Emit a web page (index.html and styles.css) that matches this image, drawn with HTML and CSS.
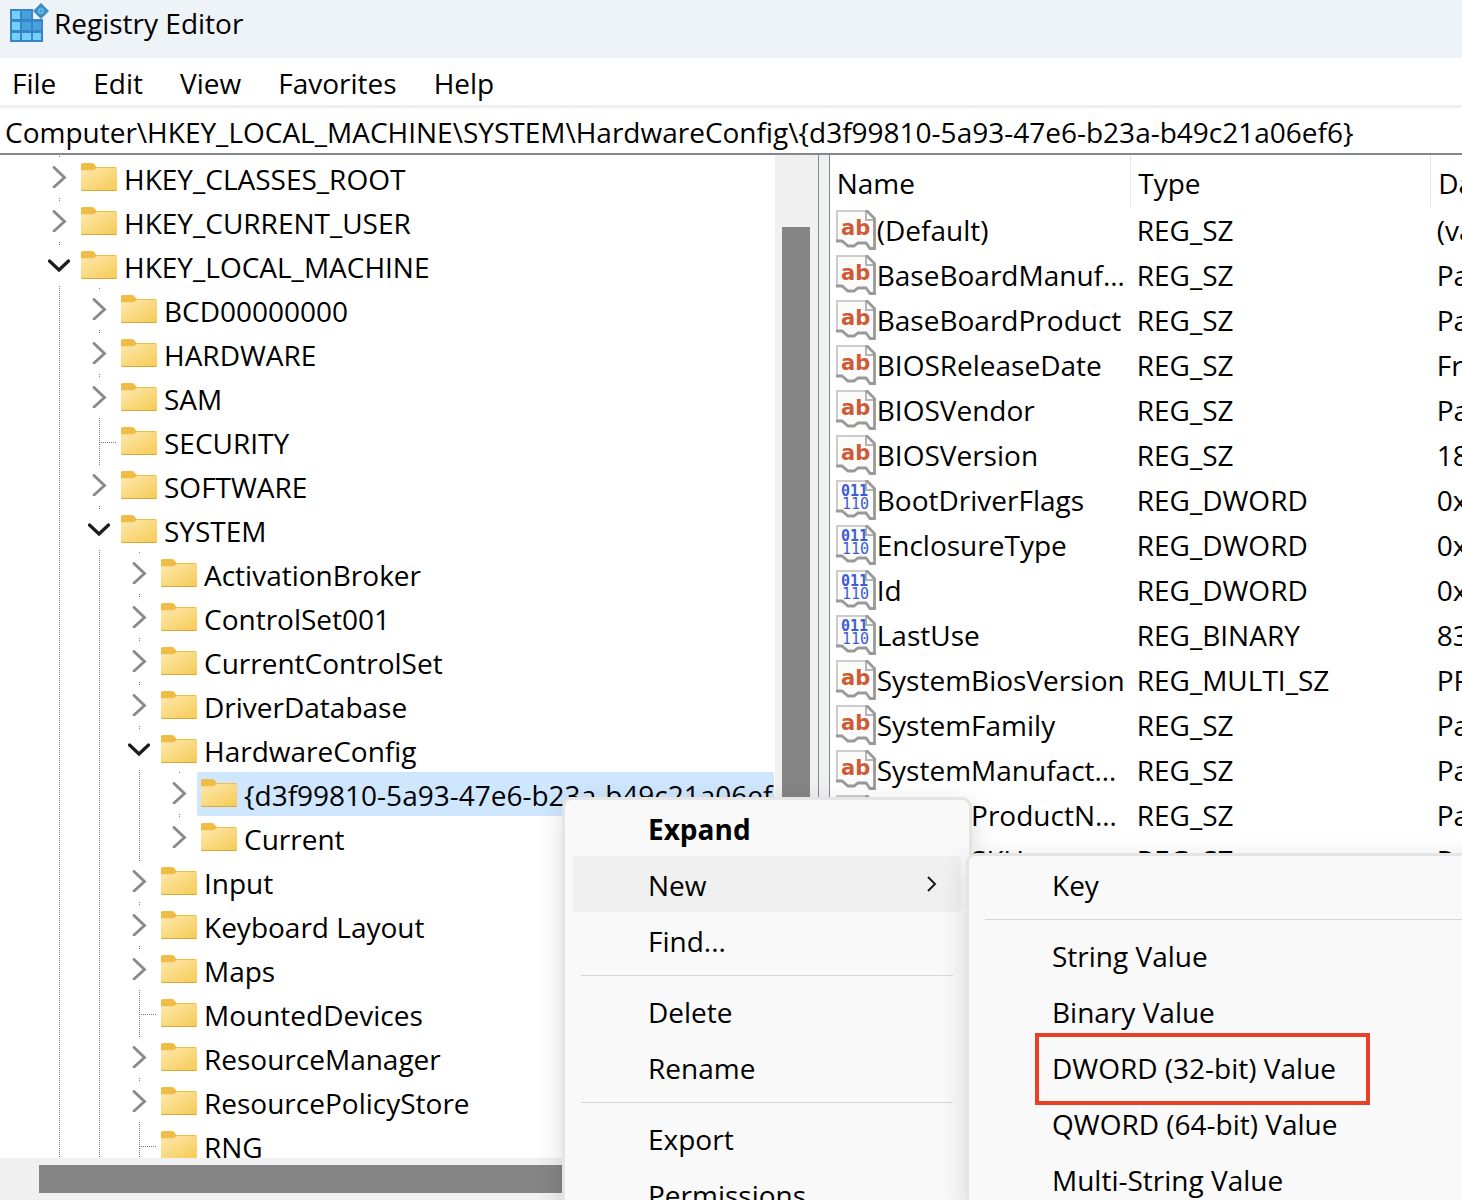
FILE: index.html
```
<!DOCTYPE html>
<html lang="en">
<head>
    <meta charset="UTF-8">
    <meta name="viewport" content="width=device-width, initial-scale=1.0">
    <title>Registry Editor</title>
    <link rel="stylesheet" href="styles.css">
</head>
<body>
    <!-- Shared icons -->
    <svg class="icon-defs" aria-hidden="true">
        <defs>
            <linearGradient id="folder-fill" x1="0" y1="0" x2="1" y2="1">
                <stop offset="0" stop-color="#fdeab0"/>
                <stop offset="1" stop-color="#f6ca54"/>
            </linearGradient>
        </defs>
        <symbol id="folder" viewBox="0 0 36 28">
            <path d="M0 9V1.500Q0 0 1.500 0H11Q12.500 0 13.500 1.200L15.500 4H34.500Q36 4 36 5.500V9Z" fill="#efbd45"/>
            <path d="M0 26.500V7.500H11.500Q13 7.500 14 6.500L15.500 5H35Q36 5 36 6V26.500Q36 28 34.500 28H1.500Q0 28 0 26.500Z" fill="#dba837"/>
            <path d="M0 25.500V7.200H11.500Q13 7.200 14 6.200L15.500 5H35Q36 5 36 6V25.500Q36 27 34.500 27H1.500Q0 27 0 25.500Z" fill="url(#folder-fill)"/>
        </symbol>
        <symbol id="closed" viewBox="0 0 22 22">
            <path d="M6 1.500L16.500 11.500L6 21" fill="none" stroke="#8a8a8a" stroke-width="2.900" stroke-linecap="round"/>
        </symbol>
        <symbol id="open" viewBox="0 0 22 22">
            <path d="M1.500 7L11 16L20.500 7" fill="none" stroke="#1c1c1c" stroke-width="3.200" stroke-linecap="round"/>
        </symbol>
        <symbol id="page" viewBox="0 0 40 40">
            <path d="M1 1H30L38 9V38L33 37L29 32H22L19 35H12L6 31H1Z" fill="#fbfbfa"/>
            <path d="M1 31V1H30" fill="none" stroke="#cdcdcd" stroke-width="2"/>
            <path d="M30 1V10H38" fill="none" stroke="#b4b4b4" stroke-width="2"/>
            <path d="M30 0L38.500 8.500V38.500H34L30 33H22L18 36H12L6 31H0" fill="none" stroke="#999" stroke-width="2.800"/>
        </symbol>
        <symbol id="string" viewBox="0 0 40 40">
            <use href="#page"/>
            <text x="5" y="25" class="glyph-ab">ab</text>
        </symbol>
        <symbol id="binary" viewBox="0 0 40 40">
            <use href="#page"/>
            <text x="5" y="16" class="glyph-bits bold">011</text>
            <text x="6" y="29" class="glyph-bits">110</text>
        </symbol>
    </svg>

    <!-- Title bar -->
    <header class="title-bar">
        <svg class="app-icon" viewBox="0 0 40 40" aria-hidden="true">
            <path d="M1 6H24V16H34V39H1Z" fill="#3784c6"/>
            <path d="M3 8h8v8H3zM3 19h8v8H3zM3 30h8v7H3zM13 30h9v7h-9zM24 30h8v7h-8z" fill="#74cffa"/>
            <path d="M13 8h9v8h-9zM13 19h9v8h-9zM24 19h8v8h-8z" fill="#47a1db"/>
            <path d="M32 0L40 8L32 16L24 8Z" fill="#3c8cc4"/>
            <path d="M32 4L36 8L32 12L28 8Z" fill="#78cdf4"/>
            <path d="M32 4V12M28 8H36" stroke="#3c8cc4"/>
        </svg>
        <span>Registry Editor</span>
    </header>

    <!-- Menu bar -->
    <nav class="menu-bar">
        <button type="button">File</button>
        <button type="button">Edit</button>
        <button type="button">View</button>
        <button type="button">Favorites</button>
        <button type="button">Help</button>
    </nav>

    <!-- Address bar -->
    <input class="address" type="text" aria-label="Address" value="Computer\HKEY_LOCAL_MACHINE\SYSTEM\HardwareConfig\{d3f99810-5a93-47e6-b23a-b49c21a06ef6}">

    <main class="panes">
        <!-- Key tree -->
        <section class="tree-pane">
            <div class="tree-view">
                <ul class="tree">
                    <li>
                        <div class="row"><button class="twisty" aria-label="Expand"><svg><use href="#closed"/></svg></button><span class="key"><svg><use href="#folder"/></svg>HKEY_CLASSES_ROOT</span></div>
                    </li>
                    <li>
                        <div class="row"><button class="twisty" aria-label="Expand"><svg><use href="#closed"/></svg></button><span class="key"><svg><use href="#folder"/></svg>HKEY_CURRENT_USER</span></div>
                    </li>
                    <li>
                        <div class="row"><button class="twisty" aria-label="Collapse"><svg><use href="#open"/></svg></button><span class="key"><svg><use href="#folder"/></svg>HKEY_LOCAL_MACHINE</span></div>
                        <ul>
                            <li>
                                <div class="row"><button class="twisty" aria-label="Expand"><svg><use href="#closed"/></svg></button><span class="key"><svg><use href="#folder"/></svg>BCD00000000</span></div>
                            </li>
                            <li>
                                <div class="row"><button class="twisty" aria-label="Expand"><svg><use href="#closed"/></svg></button><span class="key"><svg><use href="#folder"/></svg>HARDWARE</span></div>
                            </li>
                            <li>
                                <div class="row"><button class="twisty" aria-label="Expand"><svg><use href="#closed"/></svg></button><span class="key"><svg><use href="#folder"/></svg>SAM</span></div>
                            </li>
                            <li>
                                <div class="row leaf"><span class="key"><svg><use href="#folder"/></svg>SECURITY</span></div>
                            </li>
                            <li>
                                <div class="row"><button class="twisty" aria-label="Expand"><svg><use href="#closed"/></svg></button><span class="key"><svg><use href="#folder"/></svg>SOFTWARE</span></div>
                            </li>
                            <li>
                                <div class="row"><button class="twisty" aria-label="Collapse"><svg><use href="#open"/></svg></button><span class="key"><svg><use href="#folder"/></svg>SYSTEM</span></div>
                                <ul>
                                    <li>
                                        <div class="row"><button class="twisty" aria-label="Expand"><svg><use href="#closed"/></svg></button><span class="key"><svg><use href="#folder"/></svg>ActivationBroker</span></div>
                                    </li>
                                    <li>
                                        <div class="row"><button class="twisty" aria-label="Expand"><svg><use href="#closed"/></svg></button><span class="key"><svg><use href="#folder"/></svg>ControlSet001</span></div>
                                    </li>
                                    <li>
                                        <div class="row"><button class="twisty" aria-label="Expand"><svg><use href="#closed"/></svg></button><span class="key"><svg><use href="#folder"/></svg>CurrentControlSet</span></div>
                                    </li>
                                    <li>
                                        <div class="row"><button class="twisty" aria-label="Expand"><svg><use href="#closed"/></svg></button><span class="key"><svg><use href="#folder"/></svg>DriverDatabase</span></div>
                                    </li>
                                    <li>
                                        <div class="row"><button class="twisty" aria-label="Collapse"><svg><use href="#open"/></svg></button><span class="key"><svg><use href="#folder"/></svg>HardwareConfig</span></div>
                                        <ul>
                                            <li>
                                                <div class="row"><button class="twisty" aria-label="Expand"><svg><use href="#closed"/></svg></button><span class="key selected"><svg><use href="#folder"/></svg>{d3f99810-5a93-47e6-b23a-b49c21a06ef6}</span></div>
                                            </li>
                                            <li class="last">
                                                <div class="row"><button class="twisty" aria-label="Expand"><svg><use href="#closed"/></svg></button><span class="key"><svg><use href="#folder"/></svg>Current</span></div>
                                            </li>
                                        </ul>
                                    </li>
                                    <li>
                                        <div class="row"><button class="twisty" aria-label="Expand"><svg><use href="#closed"/></svg></button><span class="key"><svg><use href="#folder"/></svg>Input</span></div>
                                    </li>
                                    <li>
                                        <div class="row"><button class="twisty" aria-label="Expand"><svg><use href="#closed"/></svg></button><span class="key"><svg><use href="#folder"/></svg>Keyboard Layout</span></div>
                                    </li>
                                    <li>
                                        <div class="row"><button class="twisty" aria-label="Expand"><svg><use href="#closed"/></svg></button><span class="key"><svg><use href="#folder"/></svg>Maps</span></div>
                                    </li>
                                    <li>
                                        <div class="row leaf"><span class="key"><svg><use href="#folder"/></svg>MountedDevices</span></div>
                                    </li>
                                    <li>
                                        <div class="row"><button class="twisty" aria-label="Expand"><svg><use href="#closed"/></svg></button><span class="key"><svg><use href="#folder"/></svg>ResourceManager</span></div>
                                    </li>
                                    <li>
                                        <div class="row"><button class="twisty" aria-label="Expand"><svg><use href="#closed"/></svg></button><span class="key"><svg><use href="#folder"/></svg>ResourcePolicyStore</span></div>
                                    </li>
                                    <li>
                                        <div class="row leaf"><span class="key"><svg><use href="#folder"/></svg>RNG</span></div>
                                    </li>
                                </ul>
                            </li>
                        </ul>
                    </li>
                </ul>
            </div>
            <div class="scroll-y"><div class="thumb"></div></div>
            <div class="scroll-x"><div class="thumb"></div></div>
        </section>

        <div class="splitter"></div>

        <!-- Values of the selected key -->
        <section class="list-pane">
            <table class="values">
                <colgroup>
                    <col class="col-name">
                    <col class="col-type">
                    <col class="col-data">
                </colgroup>
                <thead>
                    <tr><th>Name</th><th>Type</th><th>Data</th></tr>
                </thead>
                <tbody>
                    <tr><td><div class="value"><svg><use href="#string"/></svg><span>(Default)</span></div></td><td>REG_SZ</td><td>(value not set)</td></tr>
                    <tr><td><div class="value"><svg><use href="#string"/></svg><span>BaseBoardManufacturer</span></div></td><td>REG_SZ</td><td>Parallels</td></tr>
                    <tr><td><div class="value"><svg><use href="#string"/></svg><span>BaseBoardProduct</span></div></td><td>REG_SZ</td><td>Parallels</td></tr>
                    <tr><td><div class="value"><svg><use href="#string"/></svg><span>BIOSReleaseDate</span></div></td><td>REG_SZ</td><td>Fri</td></tr>
                    <tr><td><div class="value"><svg><use href="#string"/></svg><span>BIOSVendor</span></div></td><td>REG_SZ</td><td>Parallels</td></tr>
                    <tr><td><div class="value"><svg><use href="#string"/></svg><span>BIOSVersion</span></div></td><td>REG_SZ</td><td>18</td></tr>
                    <tr><td><div class="value"><svg><use href="#binary"/></svg><span>BootDriverFlags</span></div></td><td>REG_DWORD</td><td>0x00000000</td></tr>
                    <tr><td><div class="value"><svg><use href="#binary"/></svg><span>EnclosureType</span></div></td><td>REG_DWORD</td><td>0x00000000</td></tr>
                    <tr><td><div class="value"><svg><use href="#binary"/></svg><span>Id</span></div></td><td>REG_DWORD</td><td>0x00000000</td></tr>
                    <tr><td><div class="value"><svg><use href="#binary"/></svg><span>LastUse</span></div></td><td>REG_BINARY</td><td>83</td></tr>
                    <tr><td><div class="value"><svg><use href="#string"/></svg><span>SystemBiosVersion</span></div></td><td>REG_MULTI_SZ</td><td>PRLS</td></tr>
                    <tr><td><div class="value"><svg><use href="#string"/></svg><span>SystemFamily</span></div></td><td>REG_SZ</td><td>Parallels</td></tr>
                    <tr><td><div class="value"><svg><use href="#string"/></svg><span>SystemManufacturer</span></div></td><td>REG_SZ</td><td>Parallels</td></tr>
                    <tr><td><div class="value"><svg><use href="#string"/></svg><span>SystemProductName</span></div></td><td>REG_SZ</td><td>Parallels</td></tr>
                    <tr><td><div class="value"><svg><use href="#string"/></svg><span>SystemSKU</span></div></td><td>REG_SZ</td><td>Parallels</td></tr>
                </tbody>
            </table>
        </section>
    </main>

    <!-- Context menu of the key -->
    <ul class="context-menu key-menu">
        <li><button type="button" class="default">Expand</button></li>
        <li>
            <button type="button" class="active">New
                <svg class="arrow" viewBox="0 0 10 18" aria-hidden="true"><path d="M1 2L8 9L1 16" fill="none" stroke="#1c1c1c" stroke-width="2"/></svg>
            </button>
        </li>
        <li><button type="button">Find...</button></li>
        <li class="separator"></li>
        <li><button type="button">Delete</button></li>
        <li><button type="button">Rename</button></li>
        <li class="separator"></li>
        <li><button type="button">Export</button></li>
        <li><button type="button">Permissions...</button></li>
    </ul>

    <!-- "New" submenu -->
    <ul class="context-menu new-menu">
        <li><button type="button">Key</button></li>
        <li class="separator"></li>
        <li><button type="button">String Value</button></li>
        <li><button type="button">Binary Value</button></li>
        <li class="marked"><button type="button">DWORD (32-bit) Value</button></li>
        <li><button type="button">QWORD (64-bit) Value</button></li>
        <li><button type="button">Multi-String Value</button></li>
    </ul>
</body>
</html>
```
FILE: styles.css
```
/* Global Styles */
*,
*::before,
*::after {
    box-sizing: border-box;
}

body {
    display: flex;
    flex-direction: column;
    position: relative;
    height: 100vh;
    margin: 0;
    overflow: hidden;
    background-color: #fff;
    color: #000;
    font-family: "Open Sans", "Noto Sans", sans-serif;
    font-size: 28px;
}

button,
input {
    margin: 0;
    padding: 0;
    border: none;
    background: none;
    color: inherit;
    font: inherit;
}

ul {
    margin: 0;
    padding: 0;
    list-style: none;
}

.icon-defs {
    position: absolute;
    width: 0;
    height: 0;
}

/* Title, menu and address bars */
.title-bar {
    display: flex;
    flex: none;
    align-items: center;
    gap: 5px;
    height: 58px;
    padding: 0 9px 12px;
    background-color: #eef3f8;
}

.app-icon {
    width: 40px;
    height: 40px;
}

.menu-bar {
    display: flex;
    flex: none;
    gap: 37px;
    height: 50px;
    padding: 2px 12px 0;
    border-bottom: 3px solid #f0f0f0;
}

.address {
    flex: none;
    width: 100%;
    height: 47px;
    padding: 2px 5px 0;
    border-bottom: 2px solid #828790;
    outline: none;
}

/* Panes */
.panes {
    display: grid;
    flex: 1;
    grid-template-columns: 56% 11px 1fr;
    min-height: 0;
}

.splitter {
    background-color: #f0f0f0;
    border-right: 1px solid #828790;
}

.tree-pane {
    display: grid;
    grid-template-columns: 1fr 43px;
    grid-template-rows: 1fr 42px;
    min-width: 0;
    min-height: 0;
    border-right: 1px solid #828790;
}

.tree-view {
    min-width: 0;
    overflow: hidden;
    padding-top: 1px;
}

.scroll-y,
.scroll-x {
    background-color: #f0f0f0;
}

.scroll-y {
    padding: 72px 7px 0;
}

.scroll-x {
    grid-column: 1 / 3;
    padding: 7px 0 7px 39px;
}

.thumb {
    background-color: #858585;
}

.scroll-y .thumb {
    width: 28px;
    height: 85%;
}

.scroll-x .thumb {
    width: 80%;
    height: 28px;
}

/* Key tree */
.tree {
    padding-left: 40px;
}

.tree ul {
    padding-left: 40px;
}

.tree li {
    background: linear-gradient(#777 50%, transparent 50%) 19px 0 / 1px 2px repeat-y;
}

.tree li.last {
    background-repeat: no-repeat;
}

.row {
    display: flex;
    height: 44px;
}

.leaf {
    margin-left: 19px;
    padding-left: 18px;
    background: linear-gradient(to right, #777 50%, transparent 50%) 0 22px / 2px 1px repeat-x;
}

.leaf .key {
    background-color: #fff;
}

.twisty {
    display: flex;
    flex: none;
    align-items: center;
    justify-content: center;
    width: 37px;
    height: 40px;
    margin-top: 1px;
    background-color: #fff;
}

.twisty svg {
    width: 22px;
    height: 22px;
}

.key {
    display: flex;
    flex: 1;
    align-items: center;
    gap: 7px;
    min-width: 0;
    padding: 2px 0 0 4px;
    overflow: hidden;
    white-space: nowrap;
}

.key svg {
    flex: none;
    width: 36px;
    height: 28px;
    margin-bottom: 4px;
}

.key.selected {
    margin-right: 1px;
    border-radius: 2px;
    background-color: #cfe6ff;
}

/* Value list */
.list-pane {
    min-width: 0;
    overflow: hidden;
}

.values {
    width: 1001px;
    border-collapse: collapse;
    table-layout: fixed;
}

.col-name {
    width: 301px;
}

.col-type {
    width: 300px;
}

.values th {
    height: 52px;
    padding: 4px 0 0 7px;
    border-right: 1px solid #e5e5e5;
    font-weight: normal;
    text-align: left;
}

.values td {
    height: 45px;
    padding: 2px 0 0 6px;
    line-height: 43px;
    white-space: nowrap;
}

.value {
    display: flex;
    align-items: center;
    gap: 1px;
    height: 43px;
}

.value svg {
    flex: none;
    width: 40px;
    height: 40px;
    margin-bottom: 2px;
}

.value span {
    overflow: hidden;
    text-overflow: ellipsis;
}

.glyph-ab {
    fill: #cf5a35;
    font: bold 21px "DejaVu Sans", sans-serif;
}

.glyph-bits {
    fill: #3f5bd6;
    font: 15px "DejaVu Sans Mono", monospace;
}

.glyph-bits.bold {
    font-weight: bold;
}

/* Context menus */
.context-menu {
    position: absolute;
    border: 3px solid #e5e5e5;
    border-radius: 10px;
    background-color: #f9f9f9;
    box-shadow: 0 8px 28px rgba(0, 0, 0, 0.14);
}

.key-menu {
    top: 797px;
    left: 562px;
    width: 410px;
}

.new-menu {
    top: 853px;
    left: 966px;
    width: 540px;
}

.context-menu li {
    padding: 0 8px;
}

.context-menu button {
    display: flex;
    align-items: center;
    justify-content: space-between;
    width: 100%;
    height: 56px;
    padding: 2px 24px 0 75px;
    border-radius: 4px;
}

.context-menu .default {
    font-weight: bold;
}

.context-menu .active {
    background-color: #f0f0f0;
}

.context-menu .separator {
    height: 15px;
    padding: 7px 16px;
}

.separator::before {
    content: "";
    display: block;
    height: 1px;
    background-color: #d7d7d7;
}

.arrow {
    width: 10px;
    height: 18px;
    margin-bottom: 2px;
}

.marked {
    position: relative;
}

.marked::after {
    content: "";
    position: absolute;
    top: -6px;
    bottom: -10px;
    left: 66px;
    width: 335px;
    border: 4px solid #ea4025;
}
```
